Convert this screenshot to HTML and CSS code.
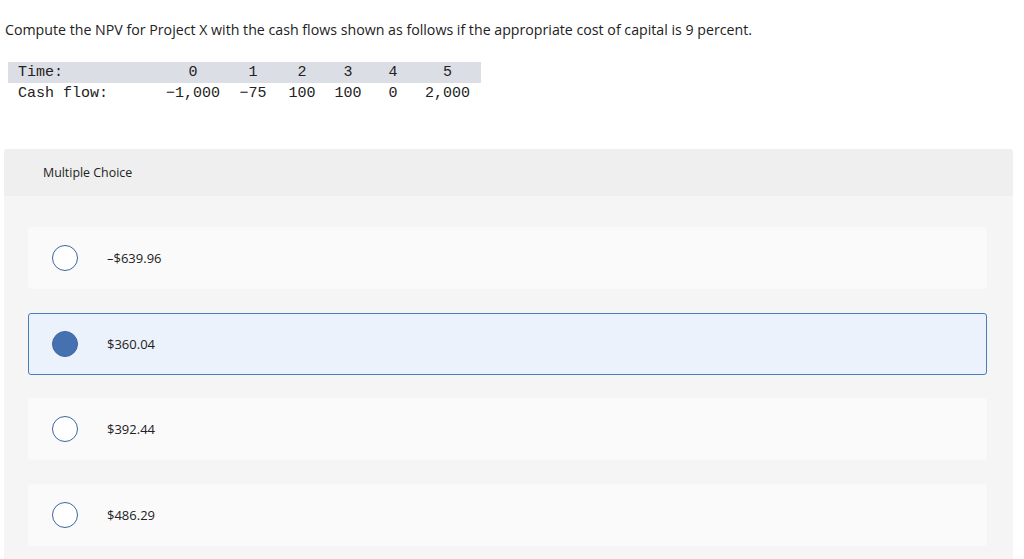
FILE: index.html
```html
<!DOCTYPE html>
<html>
<head>
<meta charset="utf-8">
<link rel="stylesheet" href="styles.css">
</head>
<body>
<p class="question">Compute the NPV for Project X with the cash flows shown as follows if the appropriate cost of capital is 9 percent.</p>
<table class="flows">
  <tr class="head">
    <td class="lbl">Time:</td><td class="c0">0</td><td class="c1">1</td><td class="c2">2</td><td class="c3">3</td><td class="c4">4</td><td class="c5">5</td>
  </tr>
  <tr>
    <td class="lbl">Cash flow:</td><td class="c0">&minus;1,000</td><td class="c1">&minus;75</td><td class="c2">100</td><td class="c3">100</td><td class="c4">0</td><td class="c5">2,000</td>
  </tr>
</table>
<section class="panel">
  <div class="panel-head">Multiple Choice</div>
  <div class="options">
    <div class="option"><span class="radio"></span><span class="ans">&ndash;$639.96</span></div>
    <div class="option selected"><span class="radio"></span><span class="ans">$360.04</span></div>
    <div class="option"><span class="radio"></span><span class="ans">$392.44</span></div>
    <div class="option"><span class="radio"></span><span class="ans">$486.29</span></div>
  </div>
</section>
</body>
</html>
```
FILE: styles.css
```css
* { box-sizing: border-box; }
body {
  margin: 0;
  background: #fff;
  font-family: "Open Sans", "Noto Sans", sans-serif;
  color: #222;
}
.question {
  margin: 0;
  padding: 20px 0 0 5px;
  font-size: 14.2px;
  line-height: 20px;
  height: 62px;
}
.flows {
  margin-left: 8px;
  border-collapse: collapse;
  font-family: "Liberation Mono", monospace;
  font-size: 15px;
  color: #222;
}
.flows td {
  padding: 0;
  height: 21px;
  line-height: 21px;
  text-align: center;
}
.flows .head td { background: #dcdee6; }
.flows .lbl { width: 152px; text-align: left; padding-left: 10px; }
.flows .c0 { width: 66px; }
.flows .c1 { width: 54px; }
.flows .c2 { width: 44px; }
.flows .c3 { width: 48px; }
.flows .c4 { width: 42px; }
.flows .c5 { width: 67px; }
.panel {
  margin: 45px 11px 0 4px;
  background: #f5f5f5;
  border-radius: 3px 3px 0 0;
  padding-bottom: 20px;
}
.panel-head {
  background: #efefef;
  height: 47px;
  padding-left: 39px;
  line-height: 47px;
  font-size: 12.4px;
  color: #222;
  border-radius: 3px 3px 0 0;
}
.options {
  display: flex;
  flex-direction: column;
  gap: 23.5px;
  padding: 31px 26px 0 24px;
}
.option {
  height: 62px;
  background: #fafafa;
  border: 1px solid #fafafa;
  border-radius: 3px;
  display: flex;
  align-items: center;
  padding-left: 23px;
}
.option.selected {
  background: #ebf2fb;
  border-color: #4c7cc0;
}
.radio {
  width: 26px;
  height: 26px;
  border-radius: 50%;
  border: 1.5px solid #3e64a0;
  background: #fff;
  flex: none;
}
.selected .radio {
  background: #4671b0;
  border-color: #3d66a5;
}
.ans {
  margin-left: 29px;
  font-size: 13px;
  color: #222;
}
```
